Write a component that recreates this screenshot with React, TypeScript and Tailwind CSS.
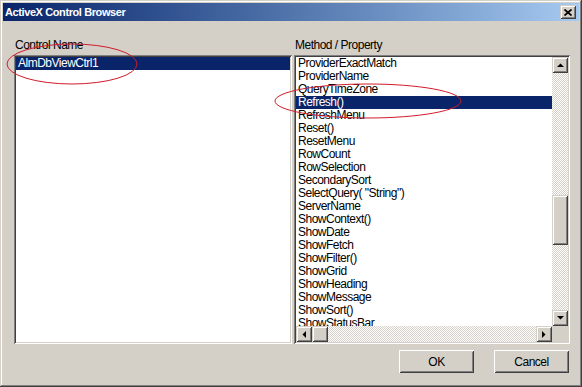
const methods = [
  'ProviderExactMatch',
  'ProviderName',
  'QueryTimeZone',
  'Refresh()',
  'RefreshMenu',
  'Reset()',
  'ResetMenu',
  'RowCount',
  'RowSelection',
  'SecondarySort',
  'SelectQuery( "String")',
  'ServerName',
  'ShowContext()',
  'ShowDate',
  'ShowFetch',
  'ShowFilter()',
  'ShowGrid',
  'ShowHeading',
  'ShowMessage',
  'ShowSort()',
  'ShowStatusBar',
];

const raised =
  'bg-[#d4d0c8] shadow-[inset_1px_1px_#d4d0c8,inset_-1px_-1px_#404040,inset_2px_2px_#fff,inset_-2px_-2px_#808080]';
const checker =
  'bg-[repeating-conic-gradient(#fff_0_25%,#d4d0c8_0_50%)] bg-[length:2px_2px]';
const sunken =
  'bg-white p-[2px] shadow-[inset_1px_1px_#808080,inset_-1px_-1px_#fff,inset_2px_2px_#404040,inset_-2px_-2px_#d4d0c8]';

function Arrow({ dir }: { dir: 'up' | 'down' | 'left' | 'right' }) {
  const pts = {
    up: '0,4 7,4 3.5,0.5',
    down: '0,0 7,0 3.5,3.5',
    left: '4,0 4,7 0.5,3.5',
    right: '0,0 0,7 3.5,3.5',
  }[dir];
  const vertical = dir === 'up' || dir === 'down';
  return (
    <svg width={vertical ? 7 : 4} height={vertical ? 4 : 7} viewBox={vertical ? '0 0 7 4' : '0 0 4 7'}>
      <polygon points={pts} fill="#000" />
    </svg>
  );
}

function ScrollButton({ dir }: { dir: 'up' | 'down' | 'left' | 'right' }) {
  return (
    <div className={`w-[16px] h-[16px] shrink-0 flex items-center justify-center ${raised}`}>
      <Arrow dir={dir} />
    </div>
  );
}

function Button({ label }: { label: string }) {
  return (
    <div
      className={`w-[75px] h-[23px] flex items-center justify-center bg-[#d4d0c8] shadow-[inset_1px_1px_#fff,inset_-1px_-1px_#404040,inset_2px_2px_#d4d0c8,inset_-2px_-2px_#808080]`}
    >
      {label}
    </div>
  );
}

export default function App() {
  return (
    <div className="relative w-[582px] h-[387px] flex flex-col bg-[#d4d0c8] p-[3px] font-['Liberation_Sans',Arial,sans-serif] text-[12px] tracking-[-0.5px] text-black shadow-[inset_-1px_-1px_#404040,inset_1px_1px_#d4d0c8,inset_-2px_-2px_#808080,inset_2px_2px_#fff]">
      {/* Title bar */}
      <div className="h-[18px] shrink-0 flex items-center justify-between pl-[2px] bg-linear-to-r from-[#0a246a] to-[#a6caf0]">
        <span className="text-white font-bold text-[11px] tracking-[-0.4px]">ActiveX Control Browser</span>
        <div className={`w-[16px] h-[14px] mr-[3px] flex items-center justify-center ${raised}`}>
          <svg width="8" height="7" viewBox="0 0 8 7">
            <path d="M0.5 0.5 L7.5 6.5 M7.5 0.5 L0.5 6.5" stroke="#000" strokeWidth="1.7" />
          </svg>
        </div>
      </div>

      <div className="flex-1 flex flex-col pl-[11px] pr-[9px] pt-[18px]">
        <div className="flex gap-[2px]">
          {/* Control Name */}
          <div className="w-[278px] flex flex-col">
            <div className="h-[13px] leading-[13px] mb-[3px] pl-[1px]">Control Name</div>
            <div className={`h-[289px] ${sunken}`}>
              <div className="h-[13px] leading-[13px] pl-[2px] bg-[#0a246a] text-white">AlmDbViewCtrl1</div>
            </div>
          </div>

          {/* Method / Property */}
          <div className="w-[276px] flex flex-col">
            <div className="h-[13px] leading-[13px] mb-[3px] pl-[1px]">Method / Property</div>
            <div className={`h-[289px] ${sunken}`}>
              <div className="h-full flex flex-col">
                <div className="flex-1 flex min-h-0">
                  <div className="flex-1 overflow-hidden">
                    {methods.map((m) => (
                      <div
                        key={m}
                        className={`h-[13px] leading-[13px] pl-[2px] whitespace-nowrap ${
                          m === 'Refresh()' ? 'bg-[#0a246a] text-white' : ''
                        }`}
                      >
                        {m}
                      </div>
                    ))}
                  </div>
                  <div className="w-[16px] flex flex-col">
                    <ScrollButton dir="up" />
                    <div className={`h-[122px] ${checker}`} />
                    <div className={`h-[50px] ${raised}`} />
                    <div className={`flex-1 ${checker}`} />
                    <ScrollButton dir="down" />
                  </div>
                </div>
                <div className="h-[16px] flex">
                  <ScrollButton dir="left" />
                  <div className={`w-[16px] ${raised}`} />
                  <div className={`flex-1 ${checker}`} />
                  <ScrollButton dir="right" />
                  <div className="w-[16px] bg-[#d4d0c8]" />
                </div>
              </div>
            </div>
          </div>
        </div>

        <div className="mt-[6px] flex justify-end gap-[20px] pr-[1px]">
          <Button label="OK" />
          <Button label="Cancel" />
        </div>
      </div>

      {/* red annotation marks */}
      <svg className="absolute top-0 left-0 pointer-events-none" width="582" height="387">
        <ellipse cx="72" cy="64" rx="65" ry="20" fill="none" stroke="#d01c2a" strokeWidth="1" />
        <ellipse cx="368" cy="101" rx="93" ry="17" fill="none" stroke="#d01c2a" strokeWidth="1" />
      </svg>
    </div>
  );
}
